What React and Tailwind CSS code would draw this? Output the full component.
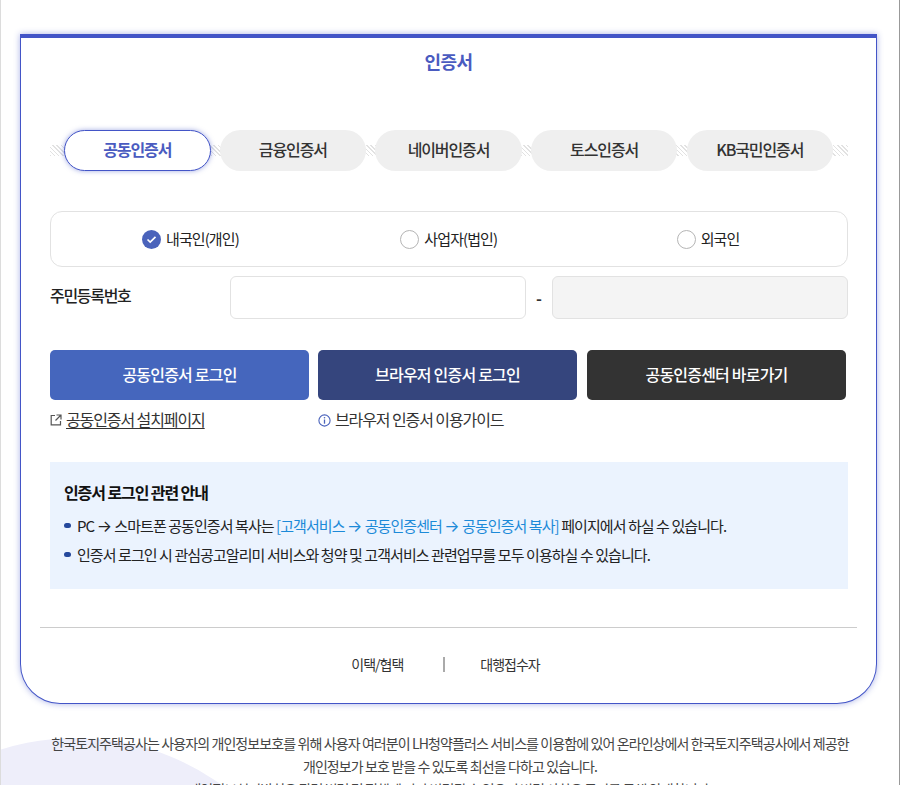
const font = { fontFamily: '"Noto Sans CJK KR", "Noto Sans", sans-serif' };

const tabs = ['공동인증서', '금융인증서', '네이버인증서', '토스인증서', 'KB국민인증서'];

function Arrow() {
  return <span className="font-['Inter'] text-[16px] leading-none tracking-normal">→</span>;
}

function Radio({ checked, label, className }) {
  return (
    <div className={`flex items-center gap-[5px] ${className}`}>
      {checked ? (
        <span className="flex h-[19px] w-[19px] items-center justify-center rounded-full bg-[#4a63bb]">
          <svg width="11" height="9" viewBox="0 0 11 9" fill="none">
            <path d="M1.5 4.5 L4.2 7 L9.5 1.8" stroke="#fff" strokeWidth="1.7" />
          </svg>
        </span>
      ) : (
        <span className="h-[19px] w-[19px] rounded-full border border-[#b5b5b5] bg-white" />
      )}
      <span className="relative top-[-1px] text-[15px] leading-[19px] tracking-[-0.9px] text-[#222]">{label}</span>
    </div>
  );
}

export default function App() {
  return (
    <div style={font} className="relative h-[785px] w-[900px] overflow-hidden border-x border-x-[#dcdcdc] border-r-[#999] bg-white">
      <div className="absolute left-[-175px] top-[738px] h-[500px] w-[500px] rounded-full bg-[#eeeefa]" />

      <div className="relative ml-[19px] mt-[34px] h-[670px] w-[857px] rounded-b-[40px] border border-t-4 border-[#4355c7] bg-white shadow-[0_0_6px_rgba(67,85,199,0.45)]">
        <h2 className="mt-[10px] text-center text-[18px] font-bold leading-[26px] tracking-[-0.5px] text-[#4a5bc0]">인증서</h2>

        <div className="relative ml-[29px] mt-[56px] w-[798px]">
          <div className="absolute left-0 right-0 top-[15px] h-[11px] bg-[repeating-linear-gradient(45deg,#e2e2e2_0,#e2e2e2_1px,#ffffff_1px,#ffffff_3px)]" />
          <div className="relative flex justify-between pl-[14px] pr-[15px]">
            {tabs.map((t, i) => (
              <div
                key={t}
                className={
                  i === 0
                    ? 'flex h-[41px] w-[146.5px] items-center justify-center rounded-full border border-[#4355c7] bg-white pb-[3px] text-[16px] font-bold tracking-[-1.1px] text-[#4a5bc0] shadow-[0_0_5px_rgba(67,85,199,0.5)]'
                    : 'flex h-[41px] w-[146.5px] items-center justify-center rounded-full bg-[#efefef] pb-[3px] text-[16px] font-medium tracking-[-1.1px] text-[#333]'
                }
              >
                {t}
              </div>
            ))}
          </div>
        </div>

        <div className="ml-[29px] mr-[28px] mt-[40px]">
          <div className="grid h-[56px] grid-cols-3 items-center rounded-[12px] border border-[#e2e2e2]">
            <Radio checked label="내국인(개인)" className="ml-[91px]" />
            <Radio label="사업자(법인)" className="ml-[84px]" />
            <Radio label="외국인" className="ml-[95px]" />
          </div>

          <div className="mt-[9px] flex items-center">
            <label className="w-[180px] pb-[5px] text-[16px] font-medium tracking-[-1.3px] text-[#222]">주민등록번호</label>
            <input className="h-[43px] w-[296px] rounded-[6px] border border-[#e2e2e2] bg-white" />
            <span className="w-[26px] text-center text-[16px] font-bold text-[#333]">-</span>
            <input disabled className="h-[43px] w-[296px] rounded-[6px] border border-[#e2e2e2] bg-[#f4f4f4]" />
          </div>

          <div className="mt-[31px] flex w-[796px] gap-[9px]">
            <button className="h-[50px] w-[259px] rounded-[5px] bg-[#4566bd] pb-[2px] text-[16px] font-medium tracking-[-0.8px] text-white">공동인증서 로그인</button>
            <button className="h-[50px] w-[259px] rounded-[5px] bg-[#35457d] pb-[2px] text-[16px] font-medium tracking-[-0.8px] text-white">브라우저 인증서 로그인</button>
            <button className="ml-px h-[50px] w-[259px] rounded-[5px] bg-[#333333] pb-[2px] text-[16px] font-medium tracking-[-0.8px] text-white">공동인증센터 바로가기</button>
          </div>

          <div className="mt-[8px] flex h-[24px] items-center text-[16px] tracking-[-1.1px] text-[#333]">
            <div className="flex w-[268px] items-center gap-[4px]">
              <svg width="12" height="12" viewBox="0 0 12 12" fill="none" stroke="#555" strokeWidth="1.2">
                <path d="M5 1.5H1.2V10.8H10.5V7" />
                <path d="M6.5 1H11V5.5M11 1 5.5 6.5" />
              </svg>
              <a className="relative top-[-1px] underline underline-offset-2">공동인증서 설치페이지</a>
            </div>
            <div className="flex items-center gap-[4px]">
              <svg width="13" height="13" viewBox="0 0 13 13" fill="none">
                <circle cx="6.5" cy="6.5" r="5.6" stroke="#4a63bb" strokeWidth="1.1" />
                <path d="M6.5 5.5V9.7" stroke="#4a63bb" strokeWidth="1.3" />
                <circle cx="6.5" cy="3.7" r="0.8" fill="#4a63bb" />
              </svg>
              <span className="relative top-[-1px]">브라우저 인증서 이용가이드</span>
            </div>
          </div>

          <div className="mt-[30px] h-[127px] bg-[#ebf3fe] pl-[14px] pt-[18px]">
            <p className="text-[16px] font-bold leading-[24px] tracking-[-1.1px] text-[#111]">인증서 로그인 관련 안내</p>
            <ul className="mt-[7px] text-[15px] leading-[29px] tracking-[-0.93px] text-[#222]">
              <li className="flex items-center gap-[6px]">
                <span className="h-[5px] w-[7px] rounded-full bg-[#24489c]" />
                <span>PC <Arrow /> 스마트폰 공동인증서 복사는 <span className="text-[#1c8ad8]">[고객서비스 <Arrow /> 공동인증센터 <Arrow /> 공동인증서 복사]</span> 페이지에서 하실 수 있습니다.</span>
              </li>
              <li className="flex items-center gap-[6px]">
                <span className="h-[5px] w-[7px] rounded-full bg-[#24489c]" />
                <span>인증서 로그인 시 관심공고알리미 서비스와 청약 및 고객서비스 관련업무를 모두 이용하실 수 있습니다.</span>
              </li>
            </ul>
          </div>
        </div>

        <div className="mx-[19px] mt-[38px] border-t border-[#cccccc]" />
        <div className="mt-[26px] flex items-center justify-center pr-[6px] text-[14px] leading-[20px] tracking-[-1px] text-[#333]">
          <span>이택/협택</span>
          <span className="ml-[40px] mr-[35px] h-[15px] w-[2px] bg-[#aaa]" />
          <span>대행접수자</span>
        </div>
      </div>

      <div className="relative mt-[28px] px-[20px] text-center text-[14px] leading-[23px] tracking-[-0.9px] text-[#444]">
        <p>한국토지주택공사는 사용자의 개인정보보호를 위해 사용자 여러분이 LH청약플러스 서비스를 이용함에 있어 온라인상에서 한국토지주택공사에서 제공한</p>
        <p>개인정보가 보호 받을 수 있도록 최선을 다하고 있습니다.</p>
        <p>개인정보처리방침은 관련 법령 및 정책에 따라 변경될 수 있으며 변경 사항은 공지를 통해 안내합니다.</p>
      </div>
    </div>
  );
}
